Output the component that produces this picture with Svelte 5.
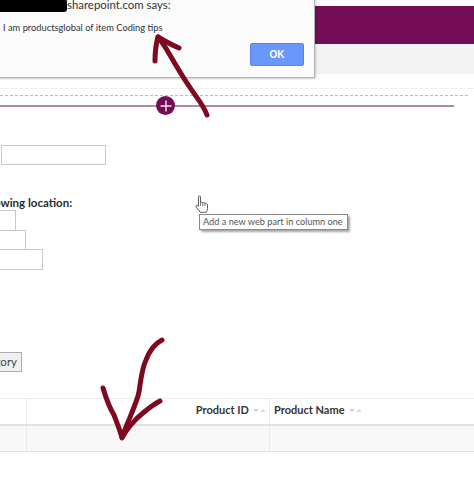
<script>
	const boxes = [15, 25, 42];
</script>

<div class="page">
	<div class="topbar">
		<div class="band"></div>
		<div class="subband"></div>
	</div>

	<div class="zone">
		<div class="dashed"></div>
		<div class="purple-line"></div>
	</div>

	<div class="form">
		<div class="text-input"></div>
		<div class="location-label">Save in the following location:</div>
		<div class="stack">
			{#each boxes as w}
				<div class="stack-box" style="width: {w}px"></div>
			{/each}
		</div>
		<button class="category">Category</button>
	</div>

	<div class="grid">
		<div class="row head">
			<div class="cell c1"></div>
			<div class="cell c2">
				<span>Product ID</span>
				<span class="sort"><i class="down"></i><i class="up"></i></span>
			</div>
			<div class="cell c3">
				<span>Product Name</span>
				<span class="sort"><i class="down"></i><i class="up"></i></span>
			</div>
		</div>
		<div class="row body">
			<div class="cell c1"></div>
			<div class="cell c2"></div>
			<div class="cell c3"></div>
		</div>
	</div>

	<!-- alert box sits over the page -->
	<div class="dialog">
		<div class="dialog-title"><span class="redact"></span>sharepoint.com says:</div>
		<div class="dialog-msg">I am productsglobal of item Coding tips</div>
		<button class="ok">OK</button>
	</div>

	<button class="add" aria-label="Add web part">
		<svg width="12" height="12" viewBox="0 0 12 12">
			<path d="M6 0.5V11.5M0.5 6H11.5" stroke="#f4e6f0" stroke-width="1.4" fill="none" />
		</svg>
	</button>

	<svg class="cursor" width="14" height="20" viewBox="0 0 14 20">
		<path
			d="M3.500 1.800C3.500.6 5.500.6 5.500 1.800V7.500C6.500 7 7.500 7.100 7.800 7.800C8.700 7.400 9.600 7.600 9.900 8.400C11 8 12.500 8.500 12.500 10V13.500C12.500 15.200 11.800 16.200 11.300 17.300H5.200C4 15.500 2.500 13.800 1 11.800C.3 10.800 1.400 9.800 2.400 10.500L3.500 11.500Z"
			fill="#fff"
			stroke="#4d4d4d"
			stroke-width="0.9"
		/>
		<path d="M5.500 7.500V11M7.800 7.800V11M9.900 8.400V11" stroke="#4d4d4d" stroke-width=".7" fill="none" />
	</svg>
	<div class="tooltip">Add a new web part in column one</div>

	<svg class="scribble" width="474" height="483" viewBox="0 0 474 483">
		<g fill="none" stroke="#7e0a20" stroke-width="5" stroke-linecap="round" stroke-linejoin="round">
			<path d="M207 115C203 104 196 97 189 86C182 76 174 62 167 50C164 45 161 41 158 37" />
			<path d="M155 61C155 52 156 44 158 37C163 40 172 45 179 48" />
			<path d="M162 340C154 344 149 352 146 360C142 368 141 378 139 392C137 402 131 414 122 437" />
			<path d="M103 388C106 398 109 407 114 415C117 423 120 430 122 438C126 430 135 419 143 413C149 408 154 404 160 401" />
		</g>
	</svg>
</div>

<style>
	:global(body) {
		margin: 0;
		background: #fff;
	}

	.page {
		position: relative;
		width: 474px;
		height: 483px;
		overflow: hidden;
		background: #fff;
		font-family: Lato, "Open Sans", sans-serif;
		color: #333;
	}

	.topbar {
		padding-top: 6px;
		padding-left: 315px;
		height: 68px;
	}

	.band {
		height: 38px;
		background: #730c56;
	}

	.subband {
		height: 30px;
		background: #f3f3f3;
	}

	.zone {
		margin-top: 14px;
		border-top: 1px solid #f0f0f0;
		padding-top: 6px;
	}

	.dashed {
		border-top: 1px dashed #bbb;
		width: 468px;
	}

	.purple-line {
		margin-top: 9px;
		height: 2px;
		width: 454px;
		background: #ad8aa6;
	}

	.form {
		padding-top: 38px;
	}

	.text-input {
		margin-left: 1px;
		width: 103px;
		height: 18px;
		border: 1px solid #c8c8c8;
	}

	.location-label {
		margin-top: 31px;
		margin-left: -81px;
		height: 14px;
		line-height: 14px;
		font-size: 11.500px;
		font-weight: 700;
		white-space: nowrap;
		color: #2b2b2b;
	}

	.stack {
		display: flex;
		flex-direction: column;
	}

	.stack-box {
		height: 18.500px;
		box-sizing: content-box;
		margin-bottom: -1px;
		border: 1px solid #c8c8c8;
		border-left: none;
	}

	.category {
		display: block;
		margin-top: 83px;
		margin-left: -40px;
		width: 62px;
		height: 20px;
		padding: 0 4px 0 0;
		text-align: right;
		font: 11.500px Lato, "Open Sans", sans-serif;
		color: #444;
		background: #f0f0f0;
		border: 1px solid #adadad;
	}

	.grid {
		position: absolute;
		left: 0;
		right: 0;
		top: 398px;
		border-top: 1px solid #eaeaea;
	}

	.row {
		display: flex;
	}

	.head {
		height: 25px;
		border-bottom: 2px solid #e2e2e2;
		font-size: 11px;
		font-weight: 700;
		color: #333;
	}

	.body {
		height: 25px;
		background: #f8f8f8;
		border-bottom: 1px solid #e2e2e2;
	}

	.cell {
		display: flex;
		align-items: center;
		gap: 4px;
		white-space: nowrap;
		padding-bottom: 4px;
	}

	.body .cell {
		padding-bottom: 0;
	}

	.c1 {
		width: 27px;
		border-right: 1px solid #eaeaea;
		box-sizing: border-box;
	}

	.c2 {
		width: 243px;
		justify-content: flex-end;
		padding-right: 3px;
		box-sizing: border-box;
		border-right: 1px solid #eaeaea;
	}

	.c3 {
		padding-left: 4px;
	}

	.sort {
		display: inline-flex;
		gap: 1px;
		align-items: center;
		margin-top: 1px;
	}

	.sort i {
		width: 0;
		height: 0;
		border-left: 3px solid transparent;
		border-right: 3px solid transparent;
	}

	.down {
		border-top: 3px solid #cfcfcf;
	}

	.up {
		border-bottom: 3px solid #dcdcdc;
	}

	.dialog {
		position: absolute;
		left: -4px;
		top: -12px;
		width: 318px;
		height: 89px;
		background: #fbfbfb;
		border-right: 1px solid #b5b5b5;
		border-bottom: 1px solid #b0b0b0;
		box-shadow: 1px 1px 2px rgba(0, 0, 0, 0.2);
	}

	.dialog-title {
		position: absolute;
		left: 0;
		top: 8px;
		display: flex;
		align-items: center;
		font-size: 11.400px;
		line-height: 18px;
		color: #333;
		white-space: nowrap;
	}

	.redact {
		display: block;
		width: 71px;
		height: 13px;
		margin-top: 1px;
		background: #000;
		border-radius: 3px;
	}

	.dialog-msg {
		position: absolute;
		left: 7px;
		top: 33px;
		font-size: 9.300px;
		line-height: 14px;
		color: #333;
		white-space: nowrap;
	}

	.ok {
		position: absolute;
		left: 254px;
		top: 55px;
		width: 54px;
		height: 23px;
		padding: 0;
		background: #6a97fb;
		border: 1px solid #5a84e0;
		border-radius: 2px;
		color: #fff;
		font: 700 10px "Liberation Sans", sans-serif;
	}

	.add {
		position: absolute;
		left: 156px;
		top: 96px;
		width: 19px;
		height: 19px;
		padding: 0;
		display: flex;
		align-items: center;
		justify-content: center;
		border: none;
		border-radius: 50%;
		background: #730c56;
	}

	.cursor {
		position: absolute;
		left: 195px;
		top: 195px;
	}

	.tooltip {
		position: absolute;
		left: 199px;
		top: 214px;
		width: 144px;
		height: 14px;
		padding-left: 3px;
		line-height: 14px;
		font-size: 9.200px;
		color: #555;
		white-space: nowrap;
		background: #fff;
		border: 1px solid #8a8a8a;
		box-shadow: 2px 2px 2px rgba(0, 0, 0, 0.35);
	}

	.scribble {
		position: absolute;
		left: 0;
		top: 0;
		pointer-events: none;
	}
</style>
